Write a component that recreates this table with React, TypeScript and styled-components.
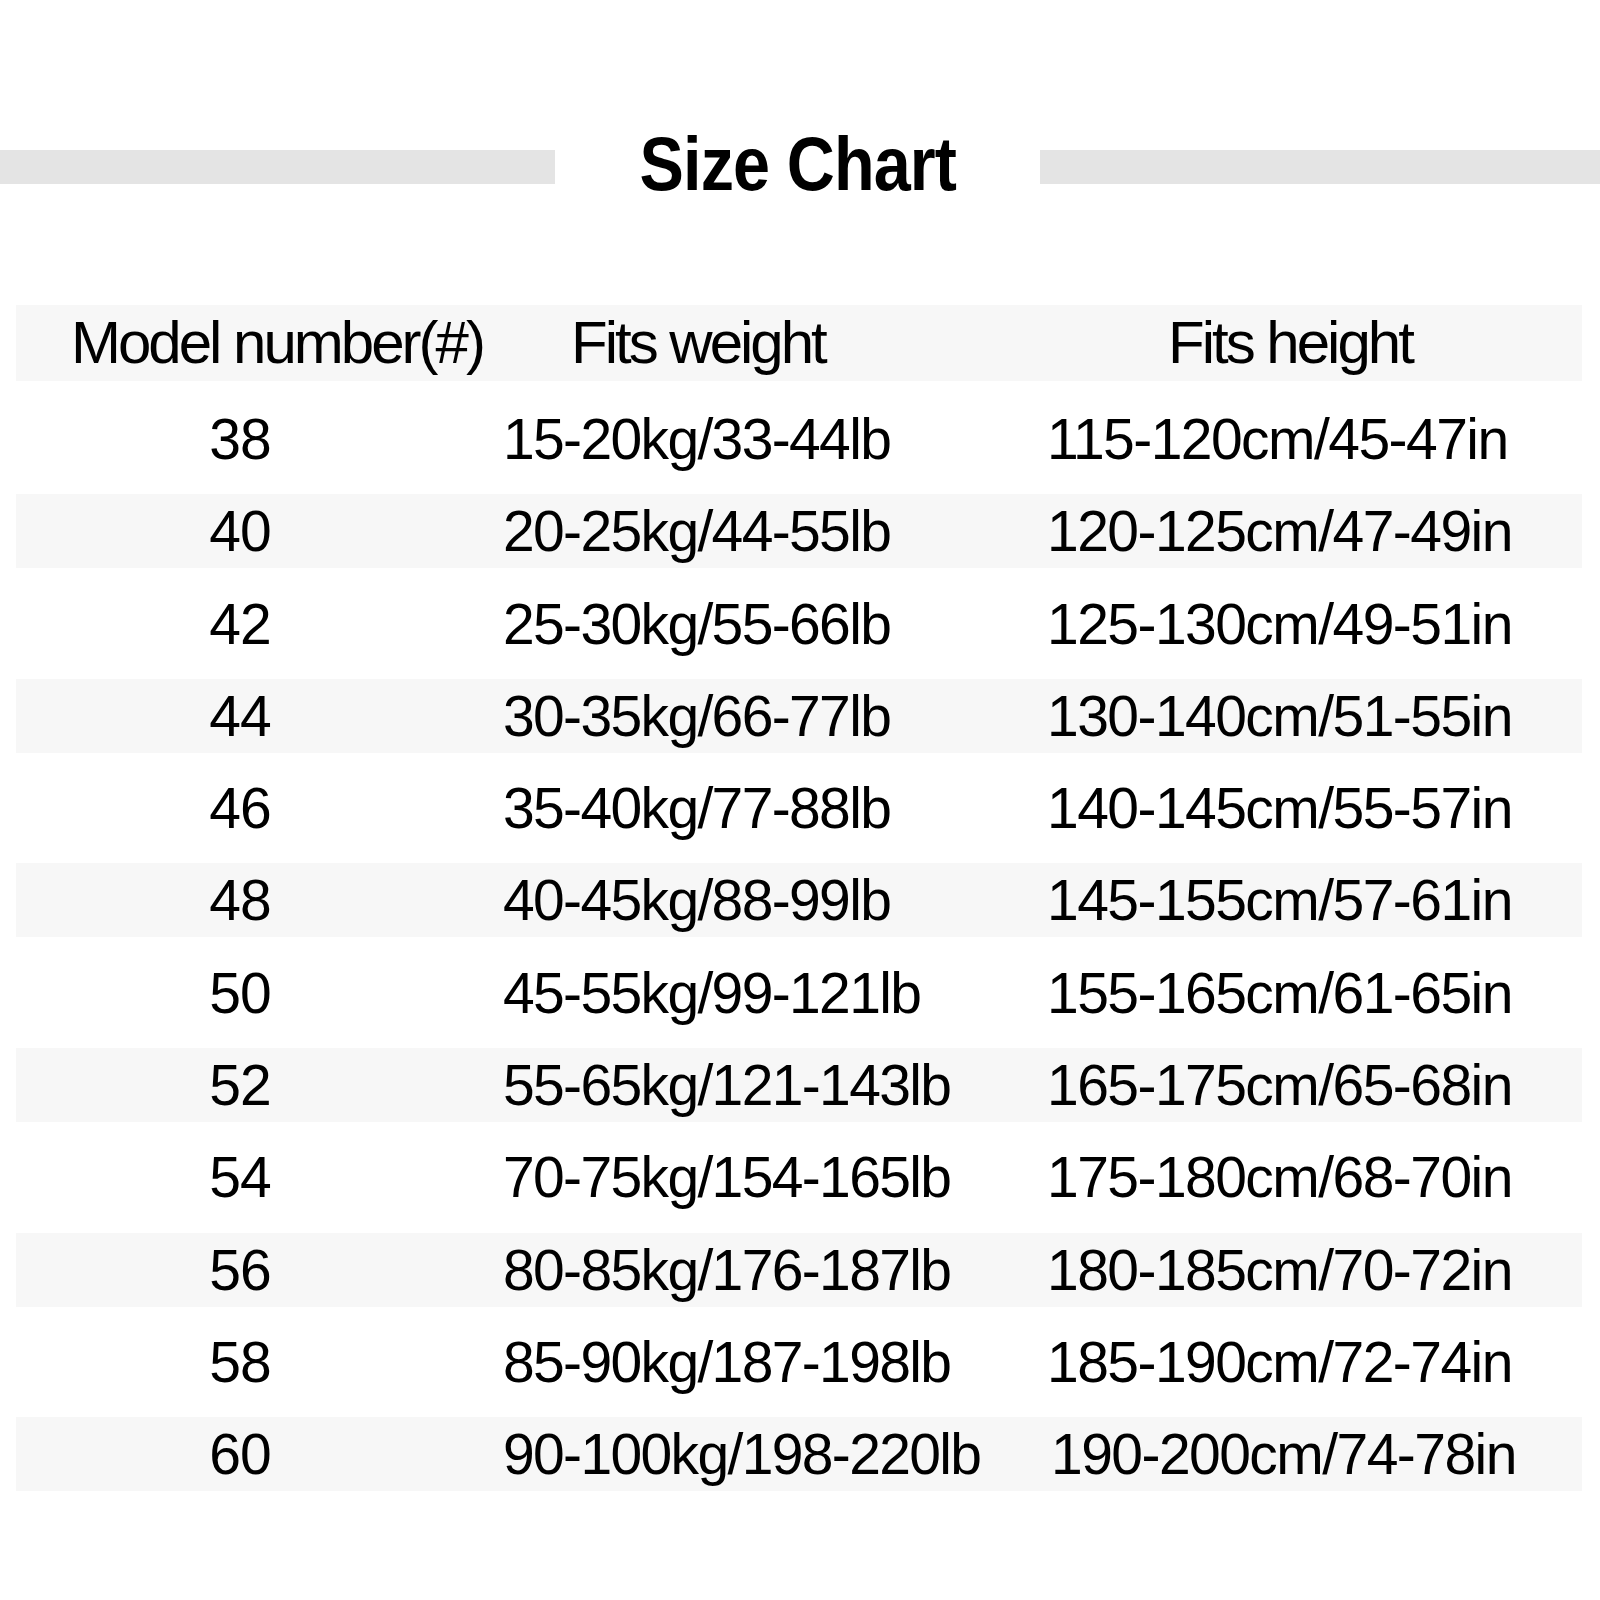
import React from "react";
import styled, { createGlobalStyle } from "styled-components";

const Global = createGlobalStyle`
  html, body { margin: 0; padding: 0; background: #ffffff; }
  body { font-family: "Liberation Sans", Arial, sans-serif; color: #000; }
`;

const Page = styled.div`
  width: 1600px;
  height: 1600px;
  background: #fff;
  display: flex;
  flex-direction: column;
  overflow: hidden;
`;

const TitleRow = styled.div`
  margin-top: 117px;
  height: 100px;
  display: flex;
  align-items: center;
`;

const Bar = styled.div<{ $width?: number }>`
  flex: ${(p) => (p.$width ? `0 0 ${p.$width}px` : "1")};
  height: 34px;
  background: #e4e4e4;
`;

const TitleBox = styled.div`
  width: 485px;
  display: flex;
  justify-content: center;
  padding-bottom: 7px;
`;

const Title = styled.h1`
  margin: 0;
  font-family: "Liberation Sans", Arial, sans-serif;
  font-weight: 700;
  font-size: 76px;
  line-height: 1;
  letter-spacing: -1px;
  transform: scaleX(0.875);
  white-space: nowrap;
`;

const Table = styled.div`
  margin: 88px 18px 0 16px;
  display: flex;
  flex-direction: column;
`;

const Grid = styled.div`
  display: grid;
  grid-template-columns: 448px 564px 1fr;
  align-items: center;
`;

const HeaderBand = styled(Grid)`
  height: 76px;
  background: #f7f7f7;
  margin-bottom: 12px;
`;

const HeadCell = styled.div<{ $pad: number }>`
  padding-left: ${(p) => p.$pad}px;
  font-size: 60px;
  line-height: 76px;
  letter-spacing: -3px;
  white-space: nowrap;
`;

const Row = styled.div`
  padding: 9px 0 9.3px;
`;

const Band = styled(Grid)<{ $striped: boolean }>`
  height: 74px;
  background: ${(p) => (p.$striped ? "#f7f7f7" : "transparent")};
`;

const ModelCell = styled.div`
  text-align: center;
  font-size: 57px;
  line-height: 74px;
  letter-spacing: -1px;
`;

const WeightCell = styled.div`
  padding-left: 39px;
  font-size: 57px;
  line-height: 74px;
  letter-spacing: -1.65px;
  white-space: nowrap;
`;

const HeightCell = styled.div<{ $shift: number }>`
  padding-left: ${(p) => 19 + p.$shift}px;
  font-size: 57px;
  line-height: 74px;
  letter-spacing: -1.55px;
  white-space: nowrap;
`;

const rows: [string, string, string, number][] = [
  ["38", "15-20kg/33-44lb", "115-120cm/45-47in", 0],
  ["40", "20-25kg/44-55lb", "120-125cm/47-49in", 0],
  ["42", "25-30kg/55-66lb", "125-130cm/49-51in", 0],
  ["44", "30-35kg/66-77lb", "130-140cm/51-55in", 0],
  ["46", "35-40kg/77-88lb", "140-145cm/55-57in", 0],
  ["48", "40-45kg/88-99lb", "145-155cm/57-61in", 0],
  ["50", "45-55kg/99-121lb", "155-165cm/61-65in", 0],
  ["52", "55-65kg/121-143lb", "165-175cm/65-68in", 0],
  ["54", "70-75kg/154-165lb", "175-180cm/68-70in", 0],
  ["56", "80-85kg/176-187lb", "180-185cm/70-72in", 0],
  ["58", "85-90kg/187-198lb", "185-190cm/72-74in", 0],
  ["60", "90-100kg/198-220lb", "190-200cm/74-78in", 4],
];

export default function App() {
  return (
    <>
      <Global />
      <Page>
        <TitleRow>
          <Bar $width={555} />
          <TitleBox>
            <Title>Size Chart</Title>
          </TitleBox>
          <Bar />
        </TitleRow>
        <Table>
          <HeaderBand>
            <HeadCell $pad={55}>Model number(#)</HeadCell>
            <HeadCell $pad={107}>Fits weight</HeadCell>
            <HeadCell $pad={140}>Fits height</HeadCell>
          </HeaderBand>
          {rows.map(([m, w, h, s], i) => (
            <Row key={m}>
              <Band $striped={i % 2 === 1}>
                <ModelCell>{m}</ModelCell>
                <WeightCell>{w}</WeightCell>
                <HeightCell $shift={s}>{h}</HeightCell>
              </Band>
            </Row>
          ))}
        </Table>
      </Page>
    </>
  );
}
